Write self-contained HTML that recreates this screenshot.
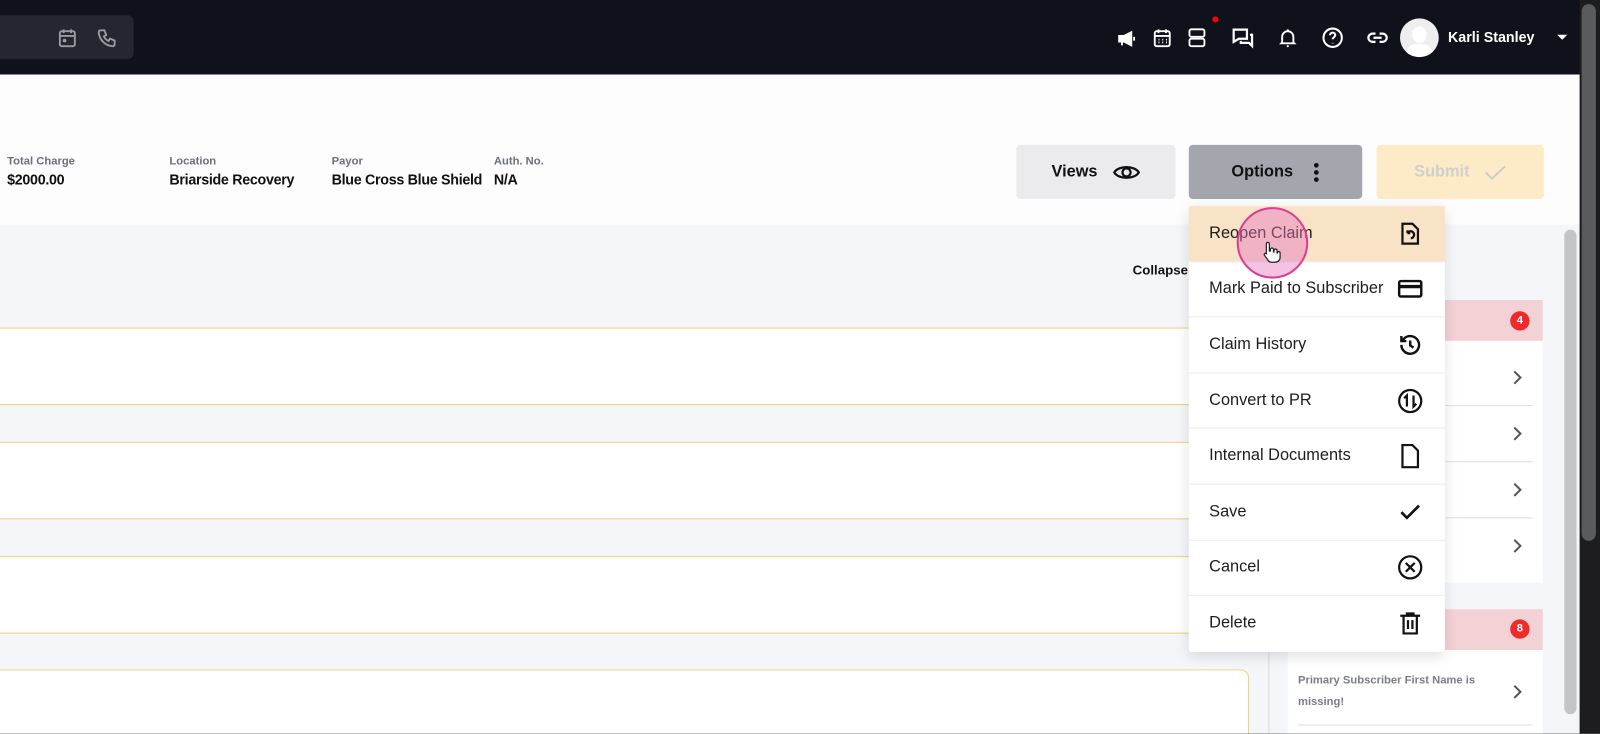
<!DOCTYPE html>
<html><head><meta charset="utf-8"><style>
*{box-sizing:border-box;margin:0;padding:0}
html,body{width:1600px;height:734px;overflow:hidden}
body{position:relative;background:#1d1d1f;font-family:"Liberation Sans",Arial,sans-serif;color:#111}
#w{position:absolute;left:0;top:0;width:1568px;height:719px;overflow:hidden;transform:scale(1.02041);transform-origin:0 0;background:#fdfdfe}
.abs{position:absolute}
.top{left:0;top:0;width:1568px;height:73px;background:#0f121b}
.lbl{font-size:11px;color:#6b6f78;font-weight:bold}
.val{font-size:14px;font-weight:bold;color:#111;margin-top:4px;letter-spacing:-0.3px}
.btn{border-radius:4px;height:53px;top:142px;display:flex;align-items:center;justify-content:center;font-weight:bold;font-size:16px;gap:14px}
.menu{left:1165px;top:202px;width:251px;height:437px;background:#fff;box-shadow:0 4px 14px rgba(0,0,0,.12);border-radius:3px}
.mi{height:54.6px;border-bottom:1px solid #ececf0;display:flex;align-items:center;justify-content:space-between;padding:0 21px 0 20px;font-size:16px;color:#1d1d1d}
.mi svg{width:26px;height:26px}
.yl{left:0;width:1222px;height:1px;background:#f0cf7a}
</style></head><body><div id="w">
<div class="abs top"></div>
<div class="abs" style="left:0;top:15px;width:131px;height:43px;background:#24272f;border-radius:0 6px 6px 0"></div>
<svg class="abs" style="left:55px;top:26px" width="22" height="22" viewBox="0 0 24 24" fill="none" stroke="#9a9ca3" stroke-width="2"><rect x="4" y="5" width="16" height="16" rx="2"/><path d="M8 3v4M16 3v4M4 10h16"/><circle cx="9" cy="15" r="1" fill="#9a9ca3"/></svg>
<svg class="abs" style="left:94px;top:26px" width="22" height="22" viewBox="0 0 24 24" fill="none" stroke="#9a9ca3" stroke-width="2"><path d="M5 4h4l2 5-2.5 1.5a11 11 0 005 5L15 13l5 2v4a2 2 0 01-2 2A16 16 0 013 6a2 2 0 012-2"/></svg>
<svg class="abs" style="left:1094px;top:27px" width="22" height="22" viewBox="0 0 24 24" fill="#fff" stroke="#fff" stroke-width="2"><path d="M3 9h5l8-4v14l-8-4H3zM6 15v4M19 10v4"/></svg>
<svg class="abs" style="left:1128px;top:25px" width="22" height="24" viewBox="0 0 24 24" fill="none" stroke="#fff" stroke-width="2"><rect x="4" y="5" width="16" height="16" rx="2"/><path d="M8 3v4M16 3v4M4 10h16M8 14h1M12 14h1M16 14h1M8 17h1M12 17h1M16 17h1"/></svg>
<svg class="abs" style="left:1162px;top:25px" width="22" height="24" viewBox="0 0 24 24" fill="none" stroke="#fff" stroke-width="2"><rect x="4" y="3" width="16" height="8" rx="2"/><rect x="4" y="13" width="16" height="8" rx="2"/></svg>
<div class="abs" style="left:1188px;top:16px;width:6px;height:6px;border-radius:50%;background:#f00"></div>
<svg class="abs" style="left:1206px;top:25px" width="24" height="24" viewBox="0 0 24 24" fill="none" stroke="#fff" stroke-width="2.2"><path d="M3 4h13v9H8l-5 3zM19 9h2v11l-3-3h-8v-2"/></svg>
<svg class="abs" style="left:1251px;top:25px" width="22" height="24" viewBox="0 0 24 24" fill="none" stroke="#fff" stroke-width="2"><path d="M6 17V11a6 6 0 0112 0v6l1 1H5zM11 21h2M12 3v2"/></svg>
<svg class="abs" style="left:1294px;top:25px" width="24" height="24" viewBox="0 0 24 24" fill="none" stroke="#fff" stroke-width="2"><circle cx="12" cy="12" r="9"/><path d="M9.5 9.5a2.5 2.5 0 115 0c0 2-2.5 2-2.5 4M12 17v.5"/></svg>
<svg class="abs" style="left:1338px;top:25px" width="24" height="24" viewBox="0 0 24 24" fill="none" stroke="#fff" stroke-width="2.2"><path d="M10 8H7a4 4 0 000 8h3M14 8h3a4 4 0 010 8h-3M8 12h8"/></svg>
<div class="abs" style="left:1372px;top:18px;width:38px;height:38px;border-radius:50%;background:#eee;overflow:hidden"><div style="position:absolute;left:12px;top:8px;width:14px;height:16px;border-radius:7px;background:#fff"></div><div style="position:absolute;left:6px;top:25px;width:26px;height:20px;border-radius:13px;background:#fff"></div></div>
<div class="abs" style="left:1419px;top:28px;color:#fff;font-weight:bold;font-size:14px">Karli Stanley</div>
<div class="abs" style="left:1526px;top:34px;width:0;height:0;border-left:5px solid transparent;border-right:5px solid transparent;border-top:5px solid #fff"></div>
<div class="abs" style="left:7px;top:152px"><div class="lbl">Total Charge</div><div class="val">$2000.00</div></div>
<div class="abs" style="left:166px;top:152px"><div class="lbl">Location</div><div class="val">Briarside Recovery</div></div>
<div class="abs" style="left:325px;top:152px"><div class="lbl">Payor</div><div class="val">Blue Cross Blue Shield</div></div>
<div class="abs" style="left:484px;top:152px"><div class="lbl">Auth. No.</div><div class="val">N/A</div></div>
<div class="abs btn" style="left:996px;width:156px;background:#ebebed">Views <svg width="28" height="20" viewBox="0 0 28 20" fill="none" stroke="#111" stroke-width="2.2"><path d="M2 10C6 3 22 3 26 10C22 17 6 17 2 10Z"/><circle cx="14" cy="10" r="4"/></svg></div>
<div class="abs btn" style="left:1165px;width:170px;background:#a3a6ad;gap:20px">Options <svg width="6" height="20"><circle cx="3" cy="3" r="2.3" fill="#111"/><circle cx="3" cy="10" r="2.3" fill="#111"/><circle cx="3" cy="17" r="2.3" fill="#111"/></svg></div>
<div class="abs btn" style="left:1349px;width:164px;background:#fdebc7;color:#cfcfcf">Submit <svg width="22" height="16" fill="none" stroke="#ccc" stroke-width="2"><path d="M2 8l6 6L21 2"/></svg></div>
<div class="abs" style="left:0;top:220px;width:1548px;height:499px;background:#f4f6fa"></div>
<div class="abs" style="left:1110px;top:257px;font-size:13px;font-weight:bold">Collapse</div>
<div class="abs" style="left:0;top:321px;width:1222px;height:75px;background:#fff"></div>
<div class="abs" style="left:0;top:433px;width:1222px;height:75px;background:#fff"></div>
<div class="abs" style="left:0;top:545px;width:1222px;height:75px;background:#fff"></div>
<div class="abs yl" style="top:321px"></div><div class="abs yl" style="top:396px"></div>
<div class="abs yl" style="top:433px"></div><div class="abs yl" style="top:508px"></div>
<div class="abs yl" style="top:545px"></div><div class="abs yl" style="top:620px"></div>
<div class="abs" style="left:-10px;top:656px;width:1234px;height:63px;background:#fff;border:1px solid #f0cf7a;border-bottom:none;border-radius:8px 8px 0 0"></div>
<div class="abs" style="left:1243px;top:580px;width:1px;height:139px;background:#d8d9de"></div>
<div class="abs" style="left:1262px;top:294px;width:250px;height:277px;background:#fff"></div>
<div class="abs" style="left:1262px;top:294px;width:250px;height:40px;background:#f3d2d6"></div>
<div class="abs" style="left:1480px;top:305px;width:19px;height:19px;border-radius:50%;background:#ee2a2a;color:#fff;font-size:11px;font-weight:bold;text-align:center;line-height:19px">4</div>
<div class="abs" style="left:1272px;top:397px;width:230px;height:1px;background:#dcdde1"></div>
<div class="abs" style="left:1272px;top:452px;width:230px;height:1px;background:#dcdde1"></div>
<div class="abs" style="left:1272px;top:507px;width:230px;height:1px;background:#dcdde1"></div>
<svg class="abs" style="left:1480px;top:362px" width="14" height="16" fill="none" stroke="#555" stroke-width="2"><path d="M4 2l6 6-6 6"/></svg>
<svg class="abs" style="left:1480px;top:417px" width="14" height="16" fill="none" stroke="#555" stroke-width="2"><path d="M4 2l6 6-6 6"/></svg>
<svg class="abs" style="left:1480px;top:472px" width="14" height="16" fill="none" stroke="#555" stroke-width="2"><path d="M4 2l6 6-6 6"/></svg>
<svg class="abs" style="left:1480px;top:527px" width="14" height="16" fill="none" stroke="#555" stroke-width="2"><path d="M4 2l6 6-6 6"/></svg>
<div class="abs" style="left:1262px;top:597px;width:250px;height:122px;background:#fff"></div>
<div class="abs" style="left:1262px;top:597px;width:250px;height:40px;background:#f3d2d6"></div>
<div class="abs" style="left:1400px;top:607px;font-size:14px;font-weight:bold">n</div>
<div class="abs" style="left:1480px;top:607px;width:19px;height:19px;border-radius:50%;background:#ee2a2a;color:#fff;font-size:11px;font-weight:bold;text-align:center;line-height:19px">8</div>
<div class="abs" style="left:1272px;top:657px;width:190px;font-size:11px;font-weight:bold;color:#7a7d85;line-height:21px">Primary Subscriber First Name is missing!</div>
<svg class="abs" style="left:1480px;top:670px" width="14" height="16" fill="none" stroke="#555" stroke-width="2"><path d="M4 2l6 6-6 6"/></svg>
<div class="abs" style="left:1272px;top:710px;width:230px;height:1px;background:#dcdde1"></div>
<div class="abs" style="left:1533px;top:225px;width:12px;height:475px;border-radius:6px;background:#c4c5c8"></div>
<div class="abs" style="left:1548px;top:0;width:20px;height:719px;background:#1d1d1f"></div>
<div class="abs" style="left:1550px;top:4px;width:14px;height:526px;border-radius:7px;background:#5a5b5e"></div>
<div class="abs menu">
<div class="mi" style="background:#f9e3c6">Reopen Claim<svg viewBox="0 0 24 24" fill="none" stroke="#111" stroke-width="2"><path d="M5 3h9l5 5v13H5z"/><path d="M9.5 11.5a3.2 3.2 0 113 4.7M9.5 11.5V9M9.5 11.5H12"/></svg></div>
<div class="mi">Mark Paid to Subscriber<svg viewBox="0 0 24 24" fill="none" stroke="#111" stroke-width="2.2"><rect x="2" y="5" width="20" height="14" rx="1.5"/><path d="M2 10h20" stroke-width="3"/></svg></div>
<div class="mi">Claim History<svg viewBox="0 0 24 24" fill="none" stroke="#111" stroke-width="2.2"><path d="M4 12a8 8 0 102.5-5.8L4 8.5M4 4v4.5h4.5M12 8v4.5l3 2"/></svg></div>
<div class="mi">Convert to PR<svg viewBox="0 0 24 24" fill="none" stroke="#111" stroke-width="2"><circle cx="12" cy="12" r="10"/><path d="M9 17V7l-2.5 2.5M15 7v10l2.5-2.5"/></svg></div>
<div class="mi">Internal Documents<svg viewBox="0 0 24 24" fill="none" stroke="#111" stroke-width="2"><path d="M5 2h9l5 5v15H5z"/></svg></div>
<div class="mi">Save<svg viewBox="0 0 24 24" fill="none" stroke="#111" stroke-width="2.4"><path d="M4 12l5 5L20 6"/></svg></div>
<div class="mi">Cancel<svg viewBox="0 0 24 24" fill="none" stroke="#111" stroke-width="2"><circle cx="12" cy="12" r="10"/><path d="M8 8l8 8M16 8l-8 8"/></svg></div>
<div class="mi" style="border-bottom:none">Delete<svg viewBox="0 0 24 24" fill="none" stroke="#111" stroke-width="2"><path d="M3 5h18M9 5V3h6v2M6 5v16h12V5M10 9v8M14 9v8"/></svg></div>
</div>
<div class="abs" style="left:1212px;top:203px;width:70px;height:70px;border-radius:50%;background:rgba(230,120,190,.45);border:2.5px solid #d83f92"></div>
<svg class="abs" style="left:1236px;top:236px" width="20" height="22" viewBox="0 0 20 22" fill="#fff" stroke="#222" stroke-width="1.2"><path d="M5 12V3a1.5 1.5 0 013 0v7h1V8.5a1.5 1.5 0 013 0V11h.5V9.5a1.5 1.5 0 013 0V12h.2a1.4 1.4 0 012.8 0v4c0 3-2 5-5 5H10c-2 0-3-1-4-3l-3-4a1.3 1.3 0 012-1.5z"/></svg>
</div></body></html>
